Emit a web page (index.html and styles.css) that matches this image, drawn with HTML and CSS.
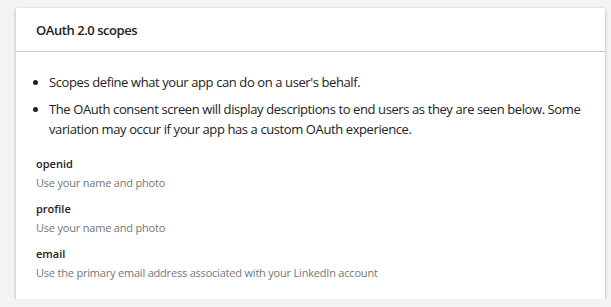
FILE: index.html
```html
<!DOCTYPE html>
<html lang="en">
<head>
  <meta charset="UTF-8">
  <title>OAuth 2.0 scopes</title>
  <link rel="stylesheet" href="styles.css">
</head>
<body>

  <div class="panel">
    <div class="panel-header">
      <h2>OAuth 2.0 scopes</h2>
    </div>

    <div class="panel-body">
      <ul class="notes">
        <li>Scopes define what your app can do on a user's behalf.</li>
        <li>The OAuth consent screen will display descriptions to end users as they are seen below. Some variation may occur if your app has a custom OAuth experience.</li>
      </ul>

      <dl class="scopes">
        <div class="scope">
          <dt>openid</dt>
          <dd>Use your name and photo</dd>
        </div>
        <div class="scope">
          <dt>profile</dt>
          <dd>Use your name and photo</dd>
        </div>
        <div class="scope">
          <dt>email</dt>
          <dd>Use the primary email address associated with your LinkedIn account</dd>
        </div>
      </dl>
    </div>
  </div>

</body>
</html>
```

FILE: styles.css
```css
body {
  margin: 0;
  padding: 8px 6px 0 16px;
  background-color: #f3f3f3;
  font-family: "Open Sans", "Noto Sans", sans-serif;
  color: #2b2b2b;
}

.panel {
  background-color: #fff;
  box-shadow: 0 1px 3px rgba(0, 0, 0, 0.3);
}

.panel-header {
  height: 44px;
  display: flex;
  align-items: center;
  padding: 0 20px;
  border-bottom: 1px solid #c8c8c8;
  box-sizing: border-box;
}

.panel-header h2 {
  margin: 0;
  font-size: 13px;
  font-weight: 600;
  letter-spacing: -0.45px;
  color: #222;
}

.panel-body {
  padding: 20px 20px 17px;
}

.notes {
  margin: 0;
  padding-left: 13px;
  font-size: 13px;
  line-height: 20px;
  letter-spacing: -0.4px;
  color: #222;
}

.notes li {
  margin-bottom: 7px;
}

.scopes {
  margin: 15px 0 0;
}

.scope {
  margin-bottom: 7px;
}

.scope:last-child {
  margin-bottom: 0;
}

.scope dt {
  font-size: 11px;
  font-weight: 600;
  line-height: 19px;
  color: #222;
}

.scope dd {
  margin: 0;
  font-size: 11px;
  line-height: 19px;
  letter-spacing: -0.2px;
  color: #767676;
}
```
